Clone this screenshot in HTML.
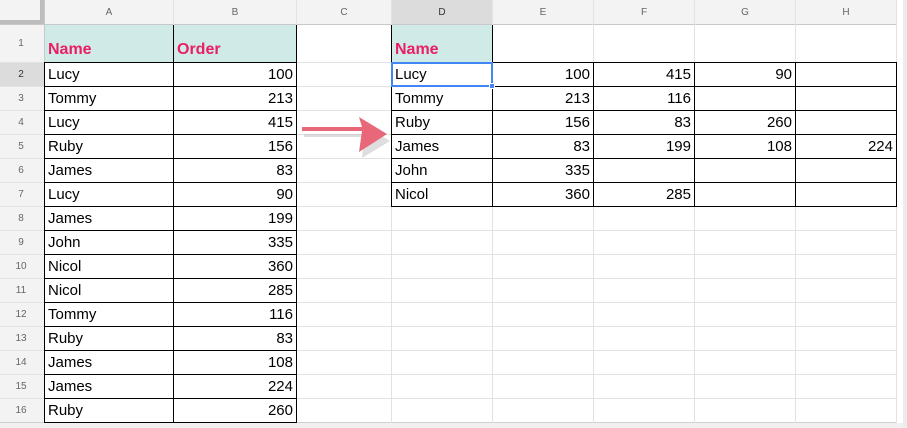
<!DOCTYPE html>
<html><head><meta charset="utf-8"><style>
body{margin:0;width:907px;height:428px;overflow:hidden;background:#fff;font-family:"Liberation Sans",Arial,sans-serif;position:relative}
.a{position:absolute}
.h{position:absolute;height:1px;background:#e2e2e2}
.v{position:absolute;width:1px;background:#e2e2e2}
.k{background:#000}
.t{position:absolute;font-size:15px;line-height:23px;color:#000;white-space:nowrap}
.l{padding-left:3px}
.r{text-align:right;padding-right:3px;box-sizing:border-box}
.ch{position:absolute;top:0;height:24px;line-height:26px;font-size:10px;color:#666;text-align:center}
.rn{position:absolute;left:0;width:42px;font-size:10px;color:#666;text-align:center}
.nm{font-weight:bold;color:#e91e63;font-size:16px}
</style></head><body>
<div class="a" style="left:0;top:0;width:907px;height:24px;background:#f3f3f3"></div>
<div class="a" style="left:0;top:0;width:44px;height:428px;background:#f3f3f3"></div>
<div class="a" style="left:392px;top:0;width:100px;height:24px;background:#dcdcdc"></div>
<div class="a" style="left:0;top:63px;width:44px;height:23px;background:#dcdcdc"></div>
<div class="a" style="left:45px;top:25px;width:251px;height:37px;background:#d0eae8"></div>
<div class="a" style="left:392px;top:25px;width:100px;height:37px;background:#d0eae8"></div>
<div class="a" style="left:897px;top:0;width:10px;height:428px;background:#fff"></div>
<div class="a" style="left:0;top:423px;width:907px;height:5px;background:#f0f0f0"></div>
<div class="a" style="left:903px;top:0;width:4px;height:428px;background:#ececec"></div>
<div class="h" style="left:0;top:24px;width:897px;background:#c8c8c8"></div>
<div class="h" style="left:0;top:62px;width:897px"></div>
<div class="h" style="left:0;top:86px;width:897px"></div>
<div class="h" style="left:0;top:110px;width:897px"></div>
<div class="h" style="left:0;top:134px;width:897px"></div>
<div class="h" style="left:0;top:158px;width:897px"></div>
<div class="h" style="left:0;top:182px;width:897px"></div>
<div class="h" style="left:0;top:206px;width:897px"></div>
<div class="h" style="left:0;top:230px;width:897px"></div>
<div class="h" style="left:0;top:254px;width:897px"></div>
<div class="h" style="left:0;top:278px;width:897px"></div>
<div class="h" style="left:0;top:302px;width:897px"></div>
<div class="h" style="left:0;top:326px;width:897px"></div>
<div class="h" style="left:0;top:350px;width:897px"></div>
<div class="h" style="left:0;top:374px;width:897px"></div>
<div class="h" style="left:0;top:398px;width:897px"></div>
<div class="h" style="left:0;top:422px;width:897px;background:#d0d0d0"></div>
<div class="v" style="left:44px;top:0;height:423px;background:#c8c8c8"></div>
<div class="v" style="left:173px;top:0;height:423px"></div>
<div class="v" style="left:296px;top:0;height:423px"></div>
<div class="v" style="left:391px;top:0;height:423px"></div>
<div class="v" style="left:492px;top:0;height:423px"></div>
<div class="v" style="left:593px;top:0;height:423px"></div>
<div class="v" style="left:694px;top:0;height:423px"></div>
<div class="v" style="left:795px;top:0;height:423px"></div>
<div class="v" style="left:896px;top:0;height:423px"></div>
<div class="a" style="left:40px;top:0;width:4px;height:24px;background:#bdbdbd"></div>
<div class="a" style="left:0;top:20px;width:44px;height:4px;background:#bdbdbd"></div>
<div class="h k" style="left:45px;top:62px;width:252px"></div>
<div class="h k" style="left:45px;top:86px;width:252px"></div>
<div class="h k" style="left:45px;top:110px;width:252px"></div>
<div class="h k" style="left:45px;top:134px;width:252px"></div>
<div class="h k" style="left:45px;top:158px;width:252px"></div>
<div class="h k" style="left:45px;top:182px;width:252px"></div>
<div class="h k" style="left:45px;top:206px;width:252px"></div>
<div class="h k" style="left:45px;top:230px;width:252px"></div>
<div class="h k" style="left:45px;top:254px;width:252px"></div>
<div class="h k" style="left:45px;top:278px;width:252px"></div>
<div class="h k" style="left:45px;top:302px;width:252px"></div>
<div class="h k" style="left:45px;top:326px;width:252px"></div>
<div class="h k" style="left:45px;top:350px;width:252px"></div>
<div class="h k" style="left:45px;top:374px;width:252px"></div>
<div class="h k" style="left:45px;top:398px;width:252px"></div>
<div class="h k" style="left:45px;top:422px;width:252px"></div>
<div class="v k" style="left:44px;top:62px;height:361px"></div>
<div class="v k" style="left:173px;top:25px;height:398px"></div>
<div class="v k" style="left:296px;top:25px;height:398px"></div>
<div class="h k" style="left:391px;top:62px;width:506px"></div>
<div class="h k" style="left:391px;top:86px;width:506px"></div>
<div class="h k" style="left:391px;top:110px;width:506px"></div>
<div class="h k" style="left:391px;top:134px;width:506px"></div>
<div class="h k" style="left:391px;top:158px;width:506px"></div>
<div class="h k" style="left:391px;top:182px;width:506px"></div>
<div class="h k" style="left:391px;top:206px;width:506px"></div>
<div class="v k" style="left:391px;top:25px;height:182px"></div>
<div class="v k" style="left:492px;top:25px;height:182px"></div>
<div class="v k" style="left:593px;top:62px;height:145px"></div>
<div class="v k" style="left:694px;top:62px;height:145px"></div>
<div class="v k" style="left:795px;top:62px;height:145px"></div>
<div class="v k" style="left:896px;top:62px;height:145px"></div>
<div class="a" style="left:391px;top:62px;width:98px;height:21px;border:2px solid #4285f4"></div>
<div class="a" style="left:489px;top:83px;width:6px;height:6px;background:#4285f4;border:1px solid #fff;box-sizing:border-box"></div>
<div class="ch" style="left:45px;width:128px">A</div>
<div class="ch" style="left:174px;width:122px">B</div>
<div class="ch" style="left:297px;width:94px">C</div>
<div class="ch" style="left:392px;width:100px;color:#333">D</div>
<div class="ch" style="left:493px;width:100px">E</div>
<div class="ch" style="left:594px;width:100px">F</div>
<div class="ch" style="left:695px;width:100px">G</div>
<div class="ch" style="left:796px;width:100px">H</div>
<div class="rn" style="top:25px;line-height:37px">1</div>
<div class="rn" style="top:63px;line-height:23px;color:#333">2</div>
<div class="rn" style="top:87px;line-height:23px">3</div>
<div class="rn" style="top:111px;line-height:23px">4</div>
<div class="rn" style="top:135px;line-height:23px">5</div>
<div class="rn" style="top:159px;line-height:23px">6</div>
<div class="rn" style="top:183px;line-height:23px">7</div>
<div class="rn" style="top:207px;line-height:23px">8</div>
<div class="rn" style="top:231px;line-height:23px">9</div>
<div class="rn" style="top:255px;line-height:23px">10</div>
<div class="rn" style="top:279px;line-height:23px">11</div>
<div class="rn" style="top:303px;line-height:23px">12</div>
<div class="rn" style="top:327px;line-height:23px">13</div>
<div class="rn" style="top:351px;line-height:23px">14</div>
<div class="rn" style="top:375px;line-height:23px">15</div>
<div class="rn" style="top:399px;line-height:23px">16</div>
<div class="t l nm" style="left:45px;top:38px">Name</div>
<div class="t l nm" style="left:174px;top:38px">Order</div>
<div class="t l nm" style="left:392px;top:38px">Name</div>
<div class="t l" style="left:45px;top:63px">Lucy</div><div class="t r" style="left:174px;width:122px;top:63px">100</div>
<div class="t l" style="left:45px;top:87px">Tommy</div><div class="t r" style="left:174px;width:122px;top:87px">213</div>
<div class="t l" style="left:45px;top:111px">Lucy</div><div class="t r" style="left:174px;width:122px;top:111px">415</div>
<div class="t l" style="left:45px;top:135px">Ruby</div><div class="t r" style="left:174px;width:122px;top:135px">156</div>
<div class="t l" style="left:45px;top:159px">James</div><div class="t r" style="left:174px;width:122px;top:159px">83</div>
<div class="t l" style="left:45px;top:183px">Lucy</div><div class="t r" style="left:174px;width:122px;top:183px">90</div>
<div class="t l" style="left:45px;top:207px">James</div><div class="t r" style="left:174px;width:122px;top:207px">199</div>
<div class="t l" style="left:45px;top:231px">John</div><div class="t r" style="left:174px;width:122px;top:231px">335</div>
<div class="t l" style="left:45px;top:255px">Nicol</div><div class="t r" style="left:174px;width:122px;top:255px">360</div>
<div class="t l" style="left:45px;top:279px">Nicol</div><div class="t r" style="left:174px;width:122px;top:279px">285</div>
<div class="t l" style="left:45px;top:303px">Tommy</div><div class="t r" style="left:174px;width:122px;top:303px">116</div>
<div class="t l" style="left:45px;top:327px">Ruby</div><div class="t r" style="left:174px;width:122px;top:327px">83</div>
<div class="t l" style="left:45px;top:351px">James</div><div class="t r" style="left:174px;width:122px;top:351px">108</div>
<div class="t l" style="left:45px;top:375px">James</div><div class="t r" style="left:174px;width:122px;top:375px">224</div>
<div class="t l" style="left:45px;top:399px">Ruby</div><div class="t r" style="left:174px;width:122px;top:399px">260</div>
<div class="t l" style="left:392px;top:63px">Lucy</div>
<div class="t r" style="left:493px;width:100px;top:63px">100</div>
<div class="t r" style="left:594px;width:100px;top:63px">415</div>
<div class="t r" style="left:695px;width:100px;top:63px">90</div>
<div class="t l" style="left:392px;top:87px">Tommy</div>
<div class="t r" style="left:493px;width:100px;top:87px">213</div>
<div class="t r" style="left:594px;width:100px;top:87px">116</div>
<div class="t l" style="left:392px;top:111px">Ruby</div>
<div class="t r" style="left:493px;width:100px;top:111px">156</div>
<div class="t r" style="left:594px;width:100px;top:111px">83</div>
<div class="t r" style="left:695px;width:100px;top:111px">260</div>
<div class="t l" style="left:392px;top:135px">James</div>
<div class="t r" style="left:493px;width:100px;top:135px">83</div>
<div class="t r" style="left:594px;width:100px;top:135px">199</div>
<div class="t r" style="left:695px;width:100px;top:135px">108</div>
<div class="t r" style="left:796px;width:100px;top:135px">224</div>
<div class="t l" style="left:392px;top:159px">John</div>
<div class="t r" style="left:493px;width:100px;top:159px">335</div>
<div class="t l" style="left:392px;top:183px">Nicol</div>
<div class="t r" style="left:493px;width:100px;top:183px">360</div>
<div class="t r" style="left:594px;width:100px;top:183px">285</div>
<!-- arrow: svg origin (295,110) -->
<svg class="a" style="left:295px;top:110px" width="100" height="50" viewBox="0 0 100 50">
<path d="M8 24 L68 24 L66 45 L94 28 L66 10 L68 21 L8 21 Z" fill="#bdbdbd" opacity="0.5" transform="translate(1,3)"/>
<path d="M7 21 L67 21 L64 42 L92 24 L64 7 L67 17 L7 17 Z" fill="#e8687a"/>
</svg>
</body></html>
